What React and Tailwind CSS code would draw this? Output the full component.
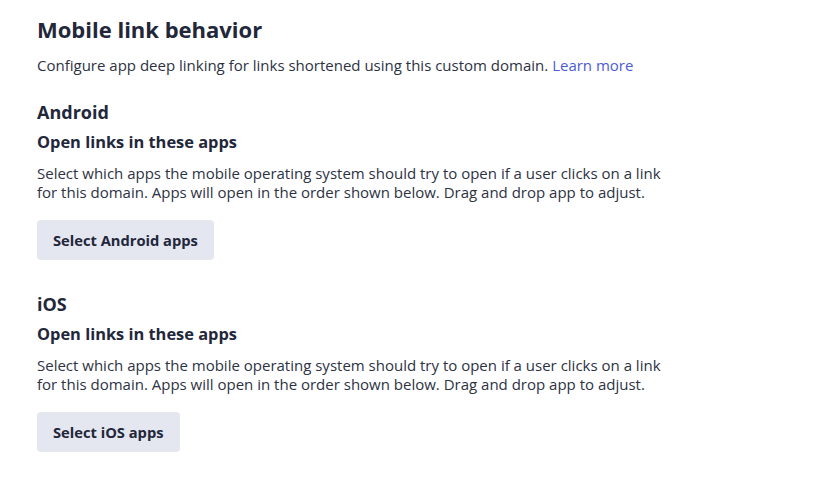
export default function App() {
  const font = { fontFamily: '"Open Sans", "Noto Sans", sans-serif' }
  return (
    <div className="min-h-screen bg-white text-[#22273a]" style={font}>
      <div className="px-[37px] pt-[14px]">
        <h1 className="text-[22px] leading-[30px] font-bold">Mobile link behavior</h1>
        <p className="mt-[11px] text-[15px] leading-[20px] text-[#2d3244]">
          Configure app deep linking for links shortened using this custom domain.{' '}
          <a href="#" className="text-[#4c5bd4]">Learn more</a>
        </p>

        <Section title="Android" button="Select Android apps" />
        <Section title="iOS" button="Select iOS apps" />
      </div>
    </div>
  )
}

function Section({ title, button }) {
  return (
    <section className="mt-[24px] mb-[31px]">
      <h2 className="text-[18px] leading-[26px] font-bold">{title}</h2>
      <h3 className="mt-[6px] text-[16.4px] leading-[22px] font-bold">Open links in these apps</h3>
      <p className="mt-[11px] w-[640px] text-[15px] leading-[19px] text-[#2d3244]">
        Select which apps the mobile operating system should try to open if a user clicks on a link
        for this domain. Apps will open in the order shown below. Drag and drop app to adjust.
      </p>
      <button
        type="button"
        className="mt-[18px] h-[40px] px-[16px] rounded-[4px] bg-[#e4e6f0] text-[14.7px] font-bold text-[#22273a]"
      >
        {button}
      </button>
    </section>
  )
}
